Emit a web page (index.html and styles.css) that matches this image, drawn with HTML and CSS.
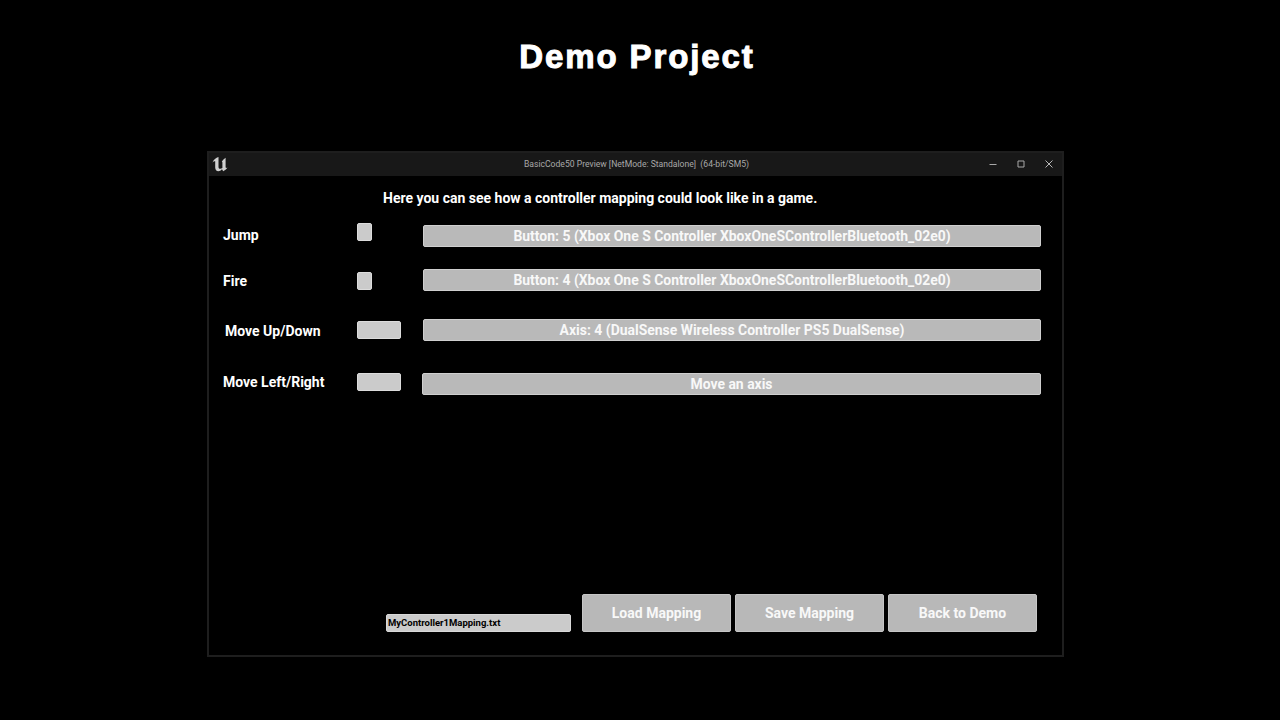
FILE: index.html
```html
<!DOCTYPE html>
<html lang="en">
<head>
  <meta charset="UTF-8">
  <meta name="viewport" content="width=device-width, initial-scale=1.0">
  <title>Demo Project</title>
  <link rel="stylesheet" href="styles.css">
</head>
<body>

  <h1>Demo Project</h1>

  <div class="window">
    <div class="titlebar">
      <svg class="logo" viewBox="0 0 16 16">
        <path d="M6.5 1 C4 1.8 1.5 3.5 .5 6.5 C1.3 5.4 2.3 5 3.2 5.2 L3.2 11.5 C3.2 13.8 4.6 15.2 6.2 15.2 C7.6 15.2 9 14.4 10 13.2 L11.2 15.2 C12.8 14.6 14.4 13.4 15.5 11.6 C14.8 12 14 12 13.6 11.4 L13.6 1.8 C12.4 2.6 11 3.8 9.8 5.4 C10.3 5.7 10.4 6.2 10.4 6.8 L10.4 12 C9.4 12.8 7.8 13.2 7 12.4 C6.6 12 6.5 11.4 6.5 10.8 Z" fill="#d0d0d0"/>
      </svg>
      <span class="window-title">BasicCode50 Preview [NetMode: Standalone]  (64-bit/SM5)</span>
      <div class="window-controls">
        <svg viewBox="0 0 10 10"><path d="M1.5 5.5H8.5" stroke="#a8a8a8" fill="none"/></svg>
        <svg viewBox="0 0 10 10"><path d="M2 2H8V8H2Z" stroke="#a8a8a8" fill="none"/></svg>
        <svg viewBox="0 0 10 10"><path d="M1.5 1.5L8.5 8.5M8.5 1.5L1.5 8.5" stroke="#b8b8b8" fill="none"/></svg>
      </div>
    </div>

    <div class="content">
      <p class="intro">Here you can see how a controller mapping could look like in a game.</p>

      <div class="mapping row-jump">
        <span class="label">Jump</span>
        <span class="indicator"></span>
        <button class="bar">Button: 5 (Xbox One S Controller XboxOneSControllerBluetooth_02e0)</button>
      </div>

      <div class="mapping row-fire">
        <span class="label">Fire</span>
        <span class="indicator"></span>
        <button class="bar">Button: 4 (Xbox One S Controller XboxOneSControllerBluetooth_02e0)</button>
      </div>

      <div class="mapping row-updown">
        <span class="label">Move Up/Down</span>
        <span class="indicator wide"></span>
        <button class="bar">Axis: 4 (DualSense Wireless Controller PS5 DualSense)</button>
      </div>

      <div class="mapping row-leftright">
        <span class="label">Move Left/Right</span>
        <span class="indicator wide"></span>
        <button class="bar">Move an axis</button>
      </div>

      <div class="footer">
        <input class="filename" type="text" value="MyController1Mapping.txt">
        <button class="action load">Load Mapping</button>
        <button class="action save">Save Mapping</button>
        <button class="action back">Back to Demo</button>
      </div>
    </div>
  </div>

</body>
</html>
```

FILE: styles.css
```css
* {
  box-sizing: border-box;
}

body {
  margin: 0;
  height: 720px;
  overflow: hidden;
  background-color: #000;
  font-family: Roboto, "Liberation Sans", sans-serif;
  color: #fff;
}

h1 {
  margin: 0;
  padding: 37px 6px 0 0;
  height: 151px;
  font-family: "Liberation Sans", Arial, sans-serif;
  font-size: 33px;
  line-height: 39px;
  font-weight: bold;
  letter-spacing: 1.9px;
  text-align: center;
  -webkit-text-stroke: 1px #fff;
}

.window {
  display: flex;
  flex-direction: column;
  width: 857px;
  height: 506px;
  margin-left: 207px;
  border: 2px solid #1e1e1e;
  background-color: #000;
}

.titlebar {
  display: flex;
  align-items: center;
  height: 23px;
  padding: 0 8px 1px 3px;
  background-color: #181818;
}

.logo {
  width: 16px;
  height: 16px;
  flex-shrink: 0;
}

.window-title {
  flex: 1;
  text-align: center;
  font-size: 8.6px;
  color: #a8a8a8;
  white-space: pre;
  padding-left: 57px;
}

.window-controls {
  display: flex;
  gap: 18px;
}

.window-controls svg {
  width: 10px;
  height: 10px;
}

.content {
  flex: 1;
  display: flex;
  flex-direction: column;
  padding: 0 21px 0 14px;
}

.intro {
  margin: 13px 0 0 160px;
  font-size: 14px;
  line-height: 18px;
  font-weight: 700;
}

.mapping {
  display: grid;
  grid-template-columns: 134px 66px 1fr;
  align-items: start;
}

.label {
  font-size: 14px;
  line-height: 18px;
  font-weight: 700;
}

.indicator {
  display: block;
  width: 15px;
  height: 18px;
  background-color: #cbcbcb;
  border: 1px solid #dcdcdc;
  border-radius: 2px;
}

.indicator.wide {
  width: 44px;
  height: 18px;
}

.bar {
  height: 22px;
  padding: 0;
  border: 1px solid #cfcfcf;
  border-radius: 2px;
  background-color: #b9b9b9;
  color: #f8f8f8;
  font-family: inherit;
  font-size: 13.95px;
  font-weight: 700;
}

.row-jump {
  margin-top: 15px;
}

.row-jump .label {
  margin-top: 4px;
}

.row-jump .indicator {
  margin-top: 1px;
}

.row-jump .bar {
  margin-top: 3px;
}

.row-fire {
  margin-top: 22px;
}

.row-fire .label {
  margin-top: 3px;
}

.row-fire .indicator {
  margin-top: 3px;
}

.row-updown {
  margin-top: 28px;
}

.row-updown .label {
  margin: 3px 0 0 2px;
}

.row-updown .indicator {
  margin-top: 2px;
}

.row-leftright {
  margin-top: 32px;
}

.row-leftright .label {
  margin-top: 0;
}

.row-leftright .bar {
  margin-left: -1px;
  padding-bottom: 1px;
}

.footer {
  display: flex;
  align-items: flex-end;
  margin: auto 0 23px 163px;
}

.filename {
  width: 185px;
  height: 18px;
  margin-right: 11px;
  padding: 0 1px 2px;
  border: 1px solid #d8d8d8;
  border-radius: 2px;
  background-color: #cbcbcb;
  color: #000;
  font-family: inherit;
  font-size: 9.5px;
  font-weight: 700;
}

.action {
  width: 149px;
  height: 38px;
  margin-right: 4px;
  padding: 0;
  border: 1px solid #c6c6c6;
  border-radius: 2px;
  background-color: #b8b8b8;
  color: #f8f8f8;
  font-family: inherit;
  font-size: 14px;
  font-weight: 700;
}

.action.back {
  margin-right: 0;
}
```
